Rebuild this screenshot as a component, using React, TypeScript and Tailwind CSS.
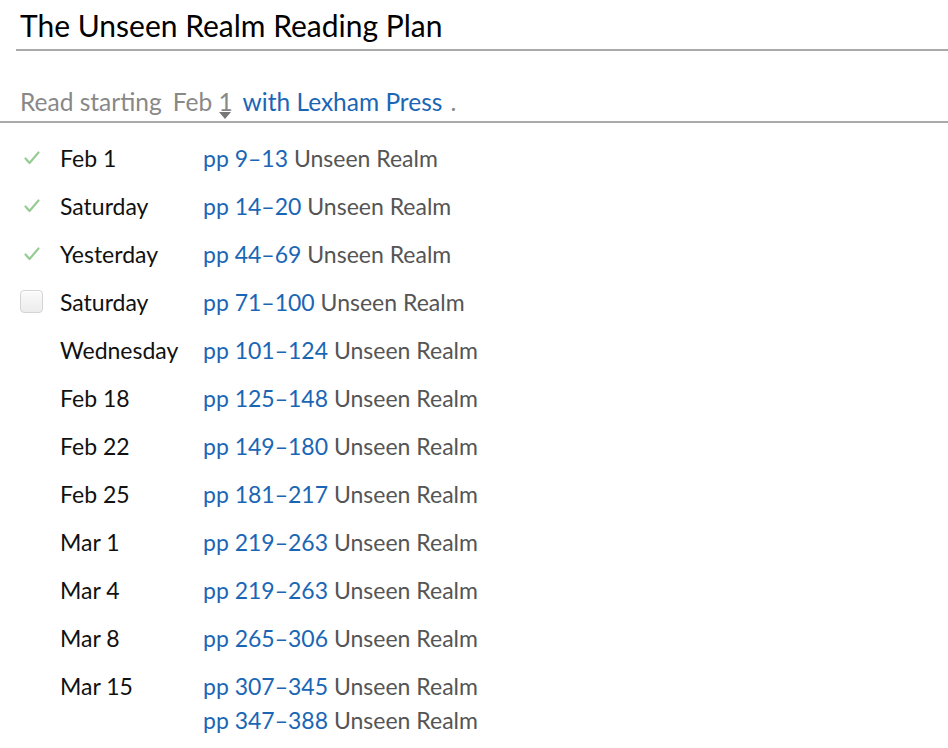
import React from "react";

type Row = { icon: "check" | "box" | "none"; date: string; pages: string[] };

const rows: Row[] = [
  { icon: "check", date: "Feb 1", pages: ["9–13"] },
  { icon: "check", date: "Saturday", pages: ["14–20"] },
  { icon: "check", date: "Yesterday", pages: ["44–69"] },
  { icon: "box", date: "Saturday", pages: ["71–100"] },
  { icon: "none", date: "Wednesday", pages: ["101–124"] },
  { icon: "none", date: "Feb 18", pages: ["125–148"] },
  { icon: "none", date: "Feb 22", pages: ["149–180"] },
  { icon: "none", date: "Feb 25", pages: ["181–217"] },
  { icon: "none", date: "Mar 1", pages: ["219–263"] },
  { icon: "none", date: "Mar 4", pages: ["219–263"] },
  { icon: "none", date: "Mar 8", pages: ["265–306"] },
  { icon: "none", date: "Mar 15", pages: ["307–345", "347–388"] },
];

function Check() {
  return (
    <svg width="16" height="14" viewBox="0 0 16 14" className="mt-[10px] ml-[4px]">
      <path d="M1.5 7.5 L5.5 12 L14.5 1.5" fill="none" stroke="#96cc96" strokeWidth="2.2" strokeLinecap="round" strokeLinejoin="round" />
    </svg>
  );
}

export default function App() {
  return (
    <div
      className="w-[948px] h-[748px] bg-white overflow-hidden text-[#111]"
      style={{ fontFamily: "Lato, 'Open Sans', sans-serif" }}
    >
      <div className="ml-4 border-b-2 border-[#aaaaaa] pl-1 h-[51px] flex items-center text-[30px] leading-none text-black">
        The Unseen Realm Reading Plan
      </div>
      <div className="border-b-2 border-[#aaaaaa] pl-5 pt-[36px] pb-[4px] text-[24.5px] leading-[30px] text-[#888]">
        <span>Read starting</span>
        <span className="relative ml-[11px] mr-[10px]">
          Feb <span className="relative">1
            <span className="absolute left-1/2 -translate-x-1/2 top-[25px] w-0 h-0 border-l-[6px] border-r-[6px] border-t-[7px] border-l-transparent border-r-transparent border-t-[#777]" />
          </span>
        </span>
        <span className="text-[#1a66b5]">with Lexham Press</span>
        <span className="ml-[8px]">.</span>
      </div>
      <div className="pl-5 pt-[18px] flex flex-col gap-[14px] text-[23px] leading-[34px]">
        {rows.map((r, i) => (
          <div key={i} className="grid grid-cols-[40px_143px_1fr]">
            <div className="h-[34px]">
              {r.icon === "check" && <Check />}
              {r.icon === "box" && (
                <div className="mt-[5px] w-[23px] h-[23px] rounded-[4px] border border-[#d4d4d4] bg-gradient-to-b from-[#fbfbfb] to-[#ececec] shadow-[inset_0_1px_0_#fff]" />
              )}
            </div>
            <div className="text-[#111] whitespace-nowrap">{r.date}</div>
            <div className="flex flex-col">
              {r.pages.map((p, j) => (
                <div key={j} className="whitespace-nowrap">
                  <span className="text-[#1a66b5]">pp {p}</span>{" "}
                  <span className="text-[#555]">Unseen Realm</span>
                </div>
              ))}
            </div>
          </div>
        ))}
      </div>
    </div>
  );
}
